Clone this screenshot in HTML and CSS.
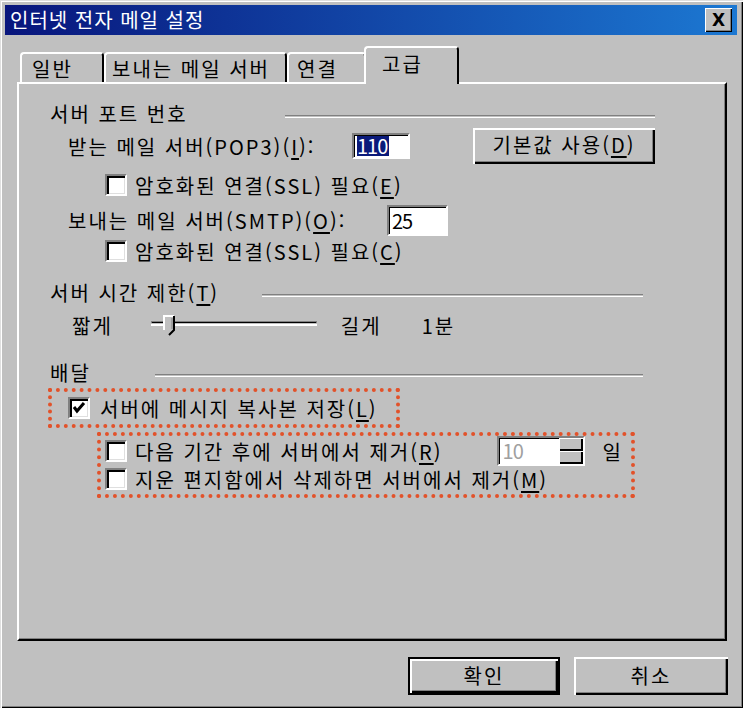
FILE: index.html
```html
<!DOCTYPE html>
<html lang="ko">
  <head>
    <meta charset="UTF-8" />
    <title>인터넷 전자 메일 설정</title>
    <link rel="stylesheet" href="styles.css">
  </head>
  <body>
    <div class="window">
      <div class="titlebar">
        <span class="title">인터넷 전자 메일 설정</span>
        <span class="close">X</span>
      </div>

      <div class="tabs">
        <div class="tab tab-general">일반</div>
        <div class="tab tab-smtp">보내는 메일 서버</div>
        <div class="tab tab-conn">연결</div>
        <div class="tab tab-adv active">고급</div>
      </div>

      <div class="panel">
        <div class="group-title">
          <span class="group-label label-port">서버 포트 번호</span>
          <span class="rule rule-port"></span>
        </div>

        <div class="row row-pop">
          <span class="field-label label-pop">받는 메일 서버(POP3)(<u>I</u>):</span>
          <span class="edit edit-pop"><span class="selected">110</span></span>
          <span class="btn btn-default-value">기본값 사용(<u>D</u>)</span>
        </div>

        <div class="row row-check row-ssl1">
          <span class="check"></span>
          <span>암호화된 연결(SSL) 필요(<u>E</u>)</span>
        </div>

        <div class="row row-smtp">
          <span class="field-label label-smtp">보내는 메일 서버(SMTP)(<u>O</u>):</span>
          <span class="edit edit-smtp">25</span>
        </div>

        <div class="row row-check row-ssl2">
          <span class="check"></span>
          <span>암호화된 연결(SSL) 필요(<u>C</u>)</span>
        </div>

        <div class="group-title group-timeout">
          <span class="group-label label-timeout">서버 시간 제한(<u>T</u>)</span>
          <span class="rule rule-timeout"></span>
        </div>

        <div class="row row-slider">
          <span class="slider-end">짧게</span>
          <svg class="slider" width="166" height="24" viewBox="0 0 166 24">
            <rect x="0" y="8" width="166" height="2" fill="#808080" />
            <rect x="1" y="9" width="164" height="1" fill="#000" />
            <rect x="0" y="11" width="166" height="2" fill="#fff" />
            <polygon points="13,3 23,3 23,17 18,22 13,17" fill="#c0c0c0" />
            <polyline points="13,17 13,3 23,3" fill="none" stroke="#fff" stroke-width="2" />
            <polyline points="23,3 23,17 18,22" fill="none" stroke="#000" stroke-width="2" />
            <polyline points="21,5 21,16" fill="none" stroke="#808080" stroke-width="1" />
          </svg>
          <span class="slider-end slider-long">길게</span>
          <span class="slider-value">1분</span>
        </div>

        <div class="group-title group-delivery">
          <span class="group-label label-delivery">배달</span>
          <span class="rule rule-delivery"></span>
        </div>

        <div class="mark mark-keep">
          <div class="row row-check">
            <span class="check">
              <svg width="14" height="14" viewBox="0 0 14 14">
                <polyline points="2,6 5,10 12,2" fill="none" stroke="#000" stroke-width="3" />
              </svg>
            </span>
            <span>서버에 메시지 복사본 저장(<u>L</u>)</span>
          </div>
        </div>

        <div class="mark mark-remove">
          <div class="row row-check row-days">
            <span class="check"></span>
            <span>다음 기간 후에 서버에서 제거(<u>R</u>)</span>
            <span class="spin">
              <span class="spin-field">10</span>
              <span class="spin-buttons">
                <span class="spin-btn"></span>
                <span class="spin-btn"></span>
              </span>
            </span>
            <span class="unit">일</span>
          </div>
          <div class="row row-check">
            <span class="check"></span>
            <span>지운 편지함에서 삭제하면 서버에서 제거(<u>M</u>)</span>
          </div>
        </div>
      </div>

      <div class="actions">
        <span class="btn btn-ok">확인</span>
        <span class="btn btn-cancel">취소</span>
      </div>
    </div>
  </body>
</html>
```

FILE: styles.css
```css
:root {
  --face: #c0c0c0;
  --shadow: #808080;
  --dark: #000;
  --light: #fff;
  --mark: #e2522a;
}

body {
  margin: 0;
  background-color: var(--face);
  font-family: "Noto Sans CJK KR", "Noto Sans", sans-serif;
  font-size: 20px;
  letter-spacing: 2px;
  color: #000;
}

u {
  text-decoration-thickness: 2px;
  text-underline-offset: 3px;
}

.window {
  width: 743px;
  height: 708px;
  box-sizing: border-box;
  padding: 5px 6px 0 5px;
  box-shadow: inset 1px 1px #dfdfdf, inset 2px 2px var(--light),
    inset -1px -1px var(--dark), inset -2px -2px var(--shadow);
}

/* title bar */

.titlebar {
  height: 30px;
  display: flex;
  align-items: center;
  justify-content: space-between;
  padding: 0 5px;
  background: linear-gradient(to right, #08157c, #1c78d2);
}

.title {
  color: #fff;
  letter-spacing: 1px;
  line-height: 30px;
}

.close {
  width: 27px;
  height: 24px;
  box-sizing: border-box;
  display: grid;
  place-items: center;
  background: var(--face);
  font-family: "DejaVu Sans", sans-serif;
  font-weight: bold;
  font-size: 17px;
  letter-spacing: 0;
  box-shadow: inset 1px 1px var(--light), inset -1px -1px var(--dark),
    inset -2px -2px var(--shadow);
}

/* tabs */

.tabs {
  height: 47px;
  display: flex;
  align-items: flex-end;
  padding-left: 15px;
}

.tab {
  height: 30px;
  box-sizing: border-box;
  padding: 2px 0 0 10px;
  line-height: 26px;
  border-top: 2px solid var(--light);
  border-left: 2px solid var(--light);
  border-right: 2px solid var(--dark);
  border-radius: 4px 4px 0 0;
}

.tab-general {
  width: 84px;
}

.tab-smtp {
  width: 183px;
  padding-left: 6px;
}

.tab-conn {
  width: 79px;
  padding-left: 8px;
}

.tab.active {
  width: 95px;
  height: 38px;
  margin: 0 0 -2px -2px;
  padding: 0 0 0 16px;
  line-height: 32px;
  background: var(--face);
  position: relative;
  z-index: 1;
}

/* panel */

.panel {
  width: 710px;
  height: 559px;
  margin-left: 12px;
  box-sizing: border-box;
  padding: 16px 0 0 29px;
  border-top: 2px solid var(--light);
  border-left: 2px solid var(--light);
  border-right: 2px solid var(--dark);
  border-bottom: 2px solid var(--dark);
  box-shadow: inset -1px -1px var(--shadow);
}

.group-title {
  height: 26px;
  display: flex;
  align-items: center;
  margin-left: 2px;
}

.group-label {
  flex: none;
}

.label-port {
  width: 235px;
}

.label-timeout {
  width: 212px;
}

.label-delivery {
  width: 105px;
}

.rule {
  height: 1px;
  margin-top: 6px;
  border-top: 1px solid var(--shadow);
  border-bottom: 1px solid var(--light);
}

.rule-port {
  width: 370px;
}

.rule-timeout {
  width: 381px;
}

.rule-delivery {
  width: 488px;
}

.row {
  display: flex;
  align-items: center;
}

.row-pop {
  height: 36px;
  margin: 2px 0 0 20px;
}

.label-pop {
  width: 284px;
}

.label-smtp {
  width: 319px;
}

.row-check {
  height: 26px;
  gap: 8px;
}

.row-ssl1 {
  margin: 8px 0 0 57px;
}

.row-smtp {
  height: 33px;
  margin: 6px 0 0 20px;
}

.row-ssl2 {
  margin: 1px 0 0 57px;
}

.group-timeout {
  margin-top: 15px;
}

.group-delivery {
  margin-top: 21px;
}

/* controls */

.edit {
  height: 26px;
  box-sizing: border-box;
  padding: 0 0 0 3px;
  display: flex;
  align-items: center;
  background: #fff;
  border: 2px solid;
  border-color: var(--shadow) var(--light) var(--light) var(--shadow);
  box-shadow: inset 1px 1px var(--dark);
  letter-spacing: -1px;
  line-height: 20px;
}

.edit-pop {
  width: 58px;
}

.edit-smtp {
  width: 61px;
  height: 31px;
}

.selected {
  background: #0a1a7a;
  color: #fff;
  padding-right: 2px;
}

.check {
  width: 22px;
  height: 22px;
  box-sizing: border-box;
  flex: none;
  display: grid;
  place-items: center;
  background: #fff;
  border: 2px solid;
  border-color: var(--shadow) var(--light) var(--light) var(--shadow);
  box-shadow: inset 2px 2px var(--dark), inset -1px -1px #dfdfdf;
}

.btn {
  display: block;
  flex: none;
  box-sizing: border-box;
  text-align: center;
  background: var(--face);
  box-shadow: inset 2px 2px var(--light), inset -2px -2px var(--dark),
    inset -3px -3px var(--shadow);
}

.btn-default-value {
  width: 182px;
  height: 36px;
  margin-left: 63px;
  line-height: 34px;
}

.row-slider {
  height: 26px;
  margin: 7px 0 0 24px;
}

.slider {
  margin-left: 38px;
}

.slider-long {
  margin-left: 24px;
}

.slider-value {
  margin-left: 40px;
}

/* highlighted delivery options */

.mark {
  border: 4px dotted var(--mark);
  box-sizing: border-box;
}

.mark-keep {
  width: 352px;
  height: 40px;
  margin-top: 3px;
  padding-left: 16px;
  display: flex;
  align-items: center;
}

.mark-keep .row-check {
  gap: 10px;
}

.mark-remove {
  width: 538px;
  margin: 4px 0 0 49px;
  padding: 0 8px 2px 4px;
}

.row-days {
  height: 30px;
}

.spin {
  width: 88px;
  height: 30px;
  flex: none;
  margin-left: auto;
  box-sizing: border-box;
  display: flex;
  background: #fff;
  border: 2px solid;
  border-color: var(--shadow) var(--light) var(--light) var(--shadow);
  box-shadow: inset 1px 1px var(--dark);
}

.spin-field {
  flex: 1;
  padding-left: 4px;
  color: #a0a0a0;
  letter-spacing: -1px;
  line-height: 26px;
}

.spin-buttons {
  width: 24px;
  display: flex;
  flex-direction: column;
}

.spin-btn {
  flex: 1;
  background: var(--face);
  box-shadow: inset 1px 1px var(--light), inset -2px -2px var(--dark);
}

.unit {
  margin-left: 10px;
}

/* dialog buttons */

.actions {
  display: flex;
  gap: 14px;
  margin: 16px 0 0 403px;
}

.btn-ok {
  width: 152px;
  height: 38px;
  line-height: 34px;
  border: 2px solid var(--dark);
}

.btn-cancel {
  width: 154px;
  height: 38px;
  line-height: 38px;
}
```
